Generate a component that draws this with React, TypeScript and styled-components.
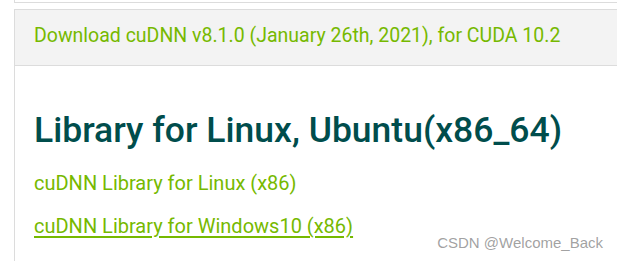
import React from "react";
import styled, { createGlobalStyle } from "styled-components";

const NV_GREEN = "#76b900";
const NV_TEAL = "#004d4c";
const BORDER = "#dcdcdc";

const GlobalStyle = createGlobalStyle`
  html, body {
    margin: 0;
    padding: 0;
    background: #fff;
  }
  body {
    font-family: Roboto, "Noto Sans", sans-serif;
  }
`;

const Page = styled.div`
  width: 617px;
  height: 261px;
  overflow: hidden;
  padding-left: 14px;
  box-sizing: border-box;
  position: relative;
`;

// bottom edge of the previous panel, cut off by the screenshot
const PrevPanel = styled.div`
  height: 2px;
  border-left: 1px solid ${BORDER};
  border-bottom: 1px solid ${BORDER};
  margin-right: -20px;
`;

const Panel = styled.div`
  margin-top: 6px;
  margin-right: -20px;
  border: 1px solid ${BORDER};
`;

const PanelHeader = styled.div`
  height: 56px;
  box-sizing: border-box;
  background: #f3f3f3;
  border-bottom: 1px solid ${BORDER};
  padding: 15px 0 0 19px;
`;

const HeaderLink = styled.a`
  color: ${NV_GREEN};
  font-size: 19.5px;
  line-height: 22px;
  text-decoration: none;
`;

const PanelBody = styled.div`
  padding: 44px 19px 60px;
`;

const Heading = styled.h2`
  margin: 0 0 22px;
  font-size: 35.5px;
  font-weight: 500;
  color: ${NV_TEAL};
  line-height: 40px;
`;

const FileLink = styled.a<{ $underline?: boolean }>`
  display: inline-block;
  color: ${NV_GREEN};
  font-size: 20px;
  line-height: 22px;
  margin-bottom: 21px;
  text-decoration: ${(p) => (p.$underline ? "underline" : "none")};
  text-decoration-thickness: 2px;
  text-underline-offset: 3px;
`;

const LinkRow = styled.div``;

const Watermark = styled.div`
  position: absolute;
  right: 14px;
  bottom: 10px;
  font-family: "Liberation Sans", Arial, sans-serif;
  font-size: 15px;
  color: rgba(120, 120, 120, 0.7);
`;

export default function App() {
  return (
    <>
      <GlobalStyle />
      <Page>
        <PrevPanel />
        <Panel>
          <PanelHeader>
            <HeaderLink href="#">
              Download cuDNN v8.1.0 (January 26th, 2021), for CUDA 10.2
            </HeaderLink>
          </PanelHeader>
          <PanelBody>
            <Heading>Library for Linux, Ubuntu(x86_64)</Heading>
            <LinkRow>
              <FileLink href="#">cuDNN Library for Linux (x86)</FileLink>
            </LinkRow>
            <LinkRow>
              <FileLink href="#" $underline>
                cuDNN Library for Windows10 (x86)
              </FileLink>
            </LinkRow>
          </PanelBody>
        </Panel>
        <Watermark>CSDN @Welcome_Back</Watermark>
      </Page>
    </>
  );
}
